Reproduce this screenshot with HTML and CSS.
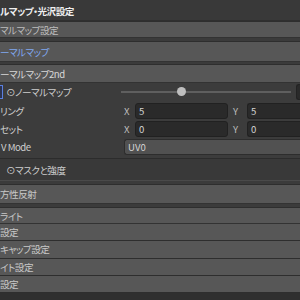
FILE: index.html
```html
<!DOCTYPE html>
<html>
<head>
<meta charset="utf-8">
<link rel="stylesheet" href="styles.css">
</head>
<body>
<div class="panel">
  <div class="hdr">ルマップ・光沢設定</div>
  <div class="fold f1">マルマップ設定</div>
  <div class="fold f2 blue">ーマルマップ</div>
  <div class="fold f3 bright">ーマルマップ2nd</div>
  <div class="content">
    <div class="crow r1">
      <span class="chk"></span>
      <span class="lbl l1">⊙ノーマルマップ</span>
      <div class="slider"><div class="track"></div><div class="knob"></div></div>
      <div class="num"></div>
    </div>
    <div class="crow">
      <span class="lbl lw">リング</span>
      <span class="axis">X</span>
      <div class="field fx">5</div>
      <span class="axis ay">Y</span>
      <div class="field fy">5</div>
    </div>
    <div class="crow">
      <span class="lbl lw">セット</span>
      <span class="axis">X</span>
      <div class="field fx">0</div>
      <span class="axis ay">Y</span>
      <div class="field fy">0</div>
    </div>
    <div class="crow">
      <span class="lbl lw uv">V Mode</span>
      <div class="drop">UV0</div>
    </div>
    <div class="mask">⊙マスクと強度</div>
  </div>
  <div class="fold f4">方性反射</div>
  <div class="fold f5">ライト</div>
  <div class="fold fs">設定</div>
  <div class="fold fs">キャップ設定</div>
  <div class="fold fs">イト設定</div>
  <div class="fold fs">設定</div>
</div>
</body>
</html>
```
FILE: styles.css
```css
html, body {
  margin: 0;
  padding: 0;
  background: #2f2f2f;
}
body {
  width: 300px;
  height: 300px;
  overflow: hidden;
  font-family: "Noto Sans CJK JP", "Noto Sans", sans-serif;
  font-size: 9.6px;
  letter-spacing: -0.5px;
  font-feature-settings: "palt";
  color: #c6c6c6;
}
.panel {
  display: flex;
  flex-direction: column;
  background: #3b3b3b;
  width: 300px;
  overflow: hidden;
}
.hdr {
  box-sizing: border-box;
  height: 21px;
  padding-top: 2px;
  display: flex;
  align-items: center;
  background: #393939;
  color: #efefef;
  font-weight: bold;
  border-bottom: 1px solid #2f2f2f;
  white-space: nowrap;
}
.fold {
  box-sizing: border-box;
  background: #575757;
  border-top: 1px solid #2e2e2e;
  border-bottom: 1px solid #333;
  display: flex;
  align-items: center;
  white-space: nowrap;
  color: #c8c8c8;
  flex-shrink: 0;
}
.f1 { height: 17px; margin-bottom: 3px; color: #bdbdbd; }
.f2 { height: 21px; margin-bottom: 2px; }
.f3 { height: 19px; }
.blue { color: #80a8f0; }
.bright { color: #d8d8d8; }
.content {
  background: #3c3c3c;
  display: flex;
  flex-direction: column;
  overflow: hidden;
}
.crow {
  width: 300px;
  height: 18px;
  display: flex;
  align-items: center;
  white-space: nowrap;
  overflow: hidden;
}
.r1 { margin-bottom: 1px; }
.crow > * { flex-shrink: 0; }
.chk {
  box-sizing: border-box;
  width: 3px;
  height: 14px;
  border: 1px solid #5a7fe0;
  border-left: none;
  background: #2c3350;
}
.lbl { color: #cecece; }
.l1 { margin-left: 3px; width: 115px; }
.lw { width: 124px; }
.uv { margin-left: 1px; width: 123px; }
.slider {
  position: relative;
  width: 170px;
  height: 18px;
  display: flex;
  align-items: center;
}
.track {
  width: 100%;
  height: 2px;
  background: #5f5f5f;
}
.knob {
  position: absolute;
  left: 56px;
  top: 4px;
  width: 9px;
  height: 9px;
  border-radius: 50%;
  background: #bebebe;
}
.num {
  box-sizing: border-box;
  margin-left: 5px;
  width: 4px;
  height: 16px;
  background: #2a2a2a;
  border: 1px solid #232323;
  border-right: none;
  border-radius: 3px 0 0 3px;
}
.axis {
  width: 11px;
  color: #bdbdbd;
  letter-spacing: 0;
}
.ay { margin-left: 5px; width: 14px; }
.field {
  box-sizing: border-box;
  height: 16px;
  line-height: 14px;
  background: #2a2a2a;
  border: 1px solid #212121;
  border-radius: 3px;
  padding-left: 3px;
  color: #d4d4d4;
  letter-spacing: 0;
}
.fx { width: 93px; }
.fy { width: 53px; border-right: none; border-radius: 3px 0 0 3px; }
.drop {
  box-sizing: border-box;
  height: 16px;
  line-height: 14px;
  width: 176px;
  background: #515151;
  border: 1px solid #2d2d2d;
  border-right: none;
  border-radius: 3px 0 0 3px;
  padding-left: 3px;
  color: #d4d4d4;
  letter-spacing: 0;
}
.mask {
  box-sizing: border-box;
  margin-top: 2px;
  height: 23px;
  background: #393939;
  border-top: 1px solid #2c2c2c;
  border-bottom: 1px solid #4a4a4a;
  display: flex;
  align-items: center;
  padding-left: 6px;
  color: #cecece;
  white-space: nowrap;
}
.f4 { margin-top: 3px; height: 20px; margin-bottom: 3px; }
.f5 { height: 17px; }
.fs { height: 17.3px; border-top: none; border-bottom: 1px solid #2e2e2e; }
```
